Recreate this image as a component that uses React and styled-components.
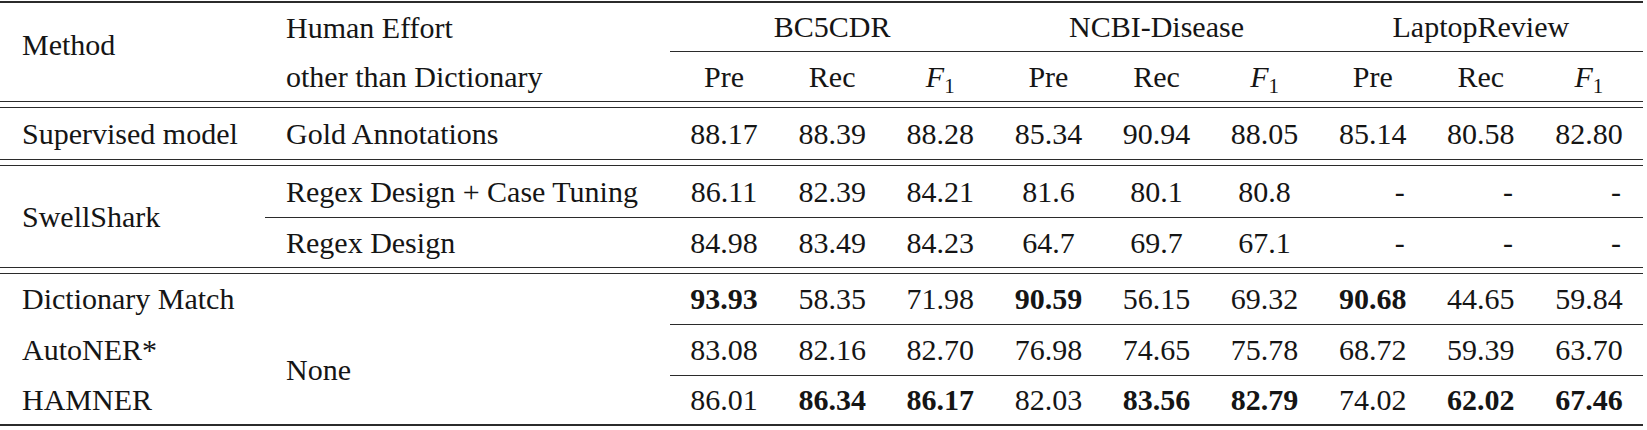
import React from 'react';
import styled, { createGlobalStyle, css } from 'styled-components';

const SERIF = '"Liberation Serif", "Times New Roman", Times, serif';

const GlobalStyle = createGlobalStyle`
  html, body {
    margin: 0;
    padding: 0;
    background: #fff;
    font-family: ${SERIF};
  }
`;

const RULE = '#2b2b2b';

const Table = styled.table`
  width: 1643px;
  margin-top: 1px;
  table-layout: fixed;
  border-collapse: separate;
  border-spacing: 0;
  border-top: 2px solid ${RULE};
  border-bottom: 2px solid ${RULE};
  font-family: ${SERIF};
  font-size: 30px;
  line-height: 1.2;
  color: #151515;
`;

const Row = styled.tr`
  height: ${props => props.$h}px;
`;

const Cell = styled.td`
  padding: 0;
  padding-left: ${props => (props.$align === 'left' ? props.$indent ?? 22 : 0)}px;
  padding-right: ${props => (props.$align === 'right' ? 22 : 0)}px;
  padding-bottom: ${props => props.$lift || 0}px;
  font-family: ${SERIF};
  font-weight: 400;
  text-align: ${props => props.$align || 'center'};
  vertical-align: middle;
  white-space: nowrap;
  ${props => props.$under && css`
    border-bottom: 1px solid ${RULE};
  `}
  ${props => props.$rule && css`
    border-top: 1px solid ${RULE};
  `}
  ${props => props.$double && css`
    padding-top: 7px;
    background:
      linear-gradient(${RULE}, ${RULE}) 0 0 / 100% 1px no-repeat,
      linear-gradient(${RULE}, ${RULE}) 0 6px / 100% 1px no-repeat;
  `}
`;

const Best = styled.b`
  font-weight: 700;
`;

const Italic = styled.i`
  font-style: italic;
`;

const Sub = styled.sub`
  font-size: 0.7em;
  vertical-align: -0.28em;
  line-height: 0;
`;

const datasets = ['BC5CDR', 'NCBI-Disease', 'LaptopReview'];

function F1() {
  return (
    <>
      <Italic>F</Italic>
      <Sub>1</Sub>
    </>
  );
}

// a value wrapped in * is bold (best result)
function Values({ list, double, rule }) {
  return list.map((v, i) => {
    if (v === '-') {
      return (
        <Cell key={i} $align="right" $double={double} $rule={rule}>
          -
        </Cell>
      );
    }
    const bold = v.startsWith('*');
    return (
      <Cell key={i} $double={double} $rule={rule}>
        {bold ? <Best>{v.slice(1)}</Best> : v}
      </Cell>
    );
  });
}

export default function App() {
  return (
    <>
      <GlobalStyle />
      <Table>
        <colgroup>
          <col style={{ width: 265 }} />
          <col style={{ width: 405 }} />
          {Array.from({ length: 9 }, (_, i) => (
            <col key={i} />
          ))}
        </colgroup>
        <thead>
          <Row $h={49}>
            <Cell as="th" rowSpan={2} $align="left" $lift={14}>
              Method
            </Cell>
            <Cell as="th" $align="left" $indent={21}>
              Human Effort
            </Cell>
            {datasets.map(d => (
              <Cell as="th" key={d} colSpan={3} $under>
                {d}
              </Cell>
            ))}
          </Row>
          <Row $h={49}>
            <Cell $align="left" $indent={21}>
              other than Dictionary
            </Cell>
            {datasets.map(d => (
              <React.Fragment key={d}>
                <Cell>Pre</Cell>
                <Cell>Rec</Cell>
                <Cell>
                  <F1 />
                </Cell>
              </React.Fragment>
            ))}
          </Row>
        </thead>
        <tbody>
          <Row $h={58}>
            <Cell $align="left" $double>
              Supervised model
            </Cell>
            <Cell $align="left" $indent={21} $double>
              Gold Annotations
            </Cell>
            <Values
              double
              list={['88.17', '88.39', '88.28', '85.34', '90.94', '88.05', '85.14', '80.58', '82.80']}
            />
          </Row>
        </tbody>
        <tbody>
          <Row $h={58}>
            <Cell rowSpan={2} $align="left" $double>
              SwellShark
            </Cell>
            <Cell $align="left" $indent={21} $double>
              Regex Design + Case Tuning
            </Cell>
            <Values
              double
              list={['86.11', '82.39', '84.21', '81.6', '80.1', '80.8', '-', '-', '-']}
            />
          </Row>
          <Row $h={50}>
            <Cell $align="left" $indent={21} $rule>
              Regex Design
            </Cell>
            <Values rule list={['84.98', '83.49', '84.23', '64.7', '69.7', '67.1', '-', '-', '-']} />
          </Row>
        </tbody>
        <tbody>
          <Row $h={57}>
            <Cell $align="left" $double>
              Dictionary Match
            </Cell>
            <Cell $double />
            <Values
              double
              list={['*93.93', '58.35', '71.98', '*90.59', '56.15', '69.32', '*90.68', '44.65', '59.84']}
            />
          </Row>
          <Row $h={51}>
            <Cell $align="left">AutoNER*</Cell>
            <Cell rowSpan={2} $align="left" $indent={21} $lift={8}>
              None
            </Cell>
            <Values
              rule
              list={['83.08', '82.16', '82.70', '76.98', '74.65', '75.78', '68.72', '59.39', '63.70']}
            />
          </Row>
          <Row $h={49}>
            <Cell $align="left">HAMNER</Cell>
            <Values
              rule
              list={['86.01', '*86.34', '*86.17', '82.03', '*83.56', '*82.79', '74.02', '*62.02', '*67.46']}
            />
          </Row>
        </tbody>
      </Table>
    </>
  );
}
